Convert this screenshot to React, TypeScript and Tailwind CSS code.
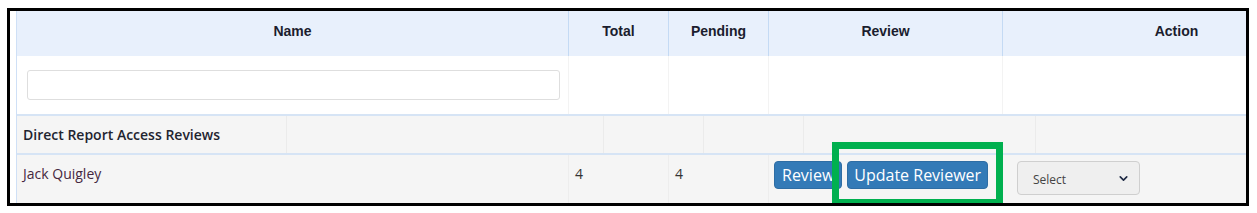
import { ChevronDown } from "lucide-react";

const headCols = [
  { label: "Name", w: "w-[551px]" },
  { label: "Total", w: "w-[100px]" },
  { label: "Pending", w: "w-[100px]" },
  { label: "Review", w: "w-[234px]" },
  { label: "Action", w: "w-[348px]" },
];

export default function App() {
  return (
    <div className="bg-white w-[1257px] h-[213px] pt-[8px] pl-[7px] font-['Open_Sans',sans-serif]">
      <div className="relative w-[1242px] h-[198px] border-[3px] border-black overflow-hidden bg-white">
        <div className="ml-[6px] w-[1340px] border-l border-[#cfe0f6]">
          {/* Header */}
          <div className="flex h-[45px] bg-[#e8f0fc]">
            {headCols.map((c, i) => (
              <div
                key={c.label}
                className={`${c.w} flex items-center justify-center pb-[4px] font-['Liberation_Sans',Arial,sans-serif] font-bold text-[14px] text-[#1b1d2e] ${
                  i > 0 ? "border-l border-[#c4daf4]" : ""
                }`}
              >
                {c.label}
              </div>
            ))}
          </div>

          {/* Filter row */}
          <div className="flex h-[58px] bg-white">
            <div className="w-[551px] pl-[10px] pr-[8px] pt-[14px]">
              <input
                type="text"
                className="w-full h-[30px] border border-[#dedede] rounded-[3px] bg-white outline-none"
              />
            </div>
            <div className="w-[100px] border-l border-[#f3f3f3]" />
            <div className="w-[100px] border-l border-[#f3f3f3]" />
            <div className="w-[234px] border-l border-[#f3f3f3]" />
            <div className="w-[348px] border-l border-[#f3f3f3]" />
          </div>

          {/* Section row */}
          <div className="flex h-[39px] bg-[#f5f5f5] border-t-2 border-[#d6e4f5]">
            <div className="w-[269px] flex items-center pl-[6px] text-[14px] font-semibold text-[#1f2430]">
              Direct Report Access Reviews
            </div>
            <div className="w-[317px] border-l border-[#ebebeb]" />
            <div className="w-[100px] border-l border-[#ebebeb]" />
            <div className="w-[100px] border-l border-[#ebebeb]" />
            <div className="w-[232px] border-l border-[#ebebeb]" />
            <div className="w-[315px] border-l border-[#ebebeb]" />
          </div>

          {/* Data row */}
          <div className="flex h-[50px] bg-[#f5f5f5] border-t-2 border-[#d6e4f5]">
            <div className="w-[551px] pl-[6px] pt-[8px] text-[14px] text-[#45283f]">Jack Quigley</div>
            <div className="w-[100px] pl-[6px] pt-[8px] text-[14px] text-[#333] border-l border-[#ededed]">4</div>
            <div className="w-[100px] pl-[6px] pt-[8px] text-[14px] text-[#333] border-l border-[#ededed]">4</div>
            <div className="w-[234px] pl-[5px] pt-[6px] border-l border-[#ededed] flex items-start gap-[5px]">
              <button className="h-[28px] px-[7px] rounded-[4px] bg-[#337ab7] border border-[#2e6da4] text-white text-[16px] leading-none">
                Review
              </button>
              <button className="h-[28px] px-[6px] rounded-[4px] bg-[#337ab7] border border-[#2e6da4] text-white text-[16px] leading-none whitespace-nowrap">
                Update Reviewer
              </button>
            </div>
            <div className="w-[348px] pl-[14px] pt-[6px] border-l border-[#ededed]">
              <div className="w-[123px] h-[34px] rounded-[4px] border border-[#cfcfcf] bg-[#efefef] flex items-center justify-between pl-[15px] pr-[9px] pt-[3px]">
                <span className="text-[12px] text-[#444]">Select</span>
                <ChevronDown size={13} strokeWidth={3} className="text-[#1e2a44] -mt-[3px]" />
              </div>
            </div>
          </div>
        </div>

        {/* Annotation box */}
        <div className="absolute left-[822px] top-[131px] w-[171px] h-[64px] border-[7px] border-[#00b04f]" />
      </div>
    </div>
  );
}
